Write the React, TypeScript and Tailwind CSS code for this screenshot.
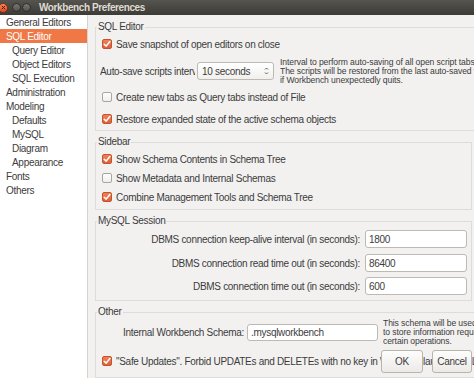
import React from 'react';

const navItems: { label: string; indent?: boolean; active?: boolean }[] = [
  { label: 'General Editors' },
  { label: 'SQL Editor', active: true },
  { label: 'Query Editor', indent: true },
  { label: 'Object Editors', indent: true },
  { label: 'SQL Execution', indent: true },
  { label: 'Administration' },
  { label: 'Modeling' },
  { label: 'Defaults', indent: true },
  { label: 'MySQL', indent: true },
  { label: 'Diagram', indent: true },
  { label: 'Appearance', indent: true },
  { label: 'Fonts' },
  { label: 'Others' },
];

function Check({ checked, label }: { checked?: boolean; label: string }) {
  return (
    <div className="flex h-[16px] items-center gap-[4px] whitespace-nowrap pl-[6px]">
      {checked ? (
        <span className="flex h-[10px] w-[10px] shrink-0 items-center justify-center rounded-[2px] border border-[#c4532f] bg-gradient-to-b from-[#f08158] to-[#e05f38]">
          <svg width="8" height="8" viewBox="0 0 8 8">
            <path d="M1.2 4.2 L3.2 6.1 L6.9 1.6" fill="none" stroke="#fff" strokeWidth="1.5" strokeLinecap="round" strokeLinejoin="round" />
          </svg>
        </span>
      ) : (
        <span className="h-[10px] w-[10px] shrink-0 rounded-[2px] border border-[#a9a69f] bg-gradient-to-b from-white to-[#efeeec]" />
      )}
      <span>{label}</span>
    </div>
  );
}

function Group({ title, children, className }: { title: string; children: React.ReactNode; className?: string }) {
  return (
    <fieldset className={`mr-[2px] ml-[7px] border border-[#dedcd8] ${className ?? ''}`}>
      <legend className="ml-[1px] px-[1px] leading-[12px]">{title}</legend>
      {children}
    </fieldset>
  );
}

function Field({ label, value }: { label: string; value: string }) {
  return (
    <div className="flex h-[18px] items-center justify-end gap-[5px] pr-[4px]">
      <span className="whitespace-nowrap">{label}</span>
      <div className="flex h-[18px] w-[102px] items-center rounded-[3px] border border-[#bdbab4] bg-white pl-[3px]">{value}</div>
    </div>
  );
}

export default function App() {
  return (
    <div
      className="relative h-[378px] w-[474px] overflow-hidden bg-[#f2f1f0] text-[10px] tracking-[-0.3px] text-[#3c3c3c]"
      style={{ fontFamily: '"Liberation Sans", Arial, sans-serif' }}
    >
      {/* title bar */}
      <div className="flex h-[15px] items-center bg-gradient-to-b from-[#56544e] to-[#3c3b37]">
        <span className="ml-[-2px] flex h-[10px] w-[10px] items-center justify-center rounded-full border border-[#8c2c12] bg-gradient-to-b from-[#f58a5c] to-[#df4a1c]">
          <svg width="5" height="5" viewBox="0 0 5 5">
            <path d="M0.8 0.8 L4.2 4.2 M4.2 0.8 L0.8 4.2" stroke="#4a1a0a" strokeWidth="1" />
          </svg>
        </span>
        <span className="ml-[4px] h-[9px] w-[9px] rounded-full border border-[#2f2e2b] bg-gradient-to-b from-[#7a7872] to-[#55534e]" />
        <span className="ml-[1px] h-[9px] w-[9px] rounded-full border border-[#2f2e2b] bg-gradient-to-b from-[#7a7872] to-[#55534e]" />
        <span className="ml-[8px] text-[10px] font-bold tracking-[-0.4px] text-[#dfdbd2]">Workbench Preferences</span>
      </div>

      <div className="flex h-[363px]">
        {/* sidebar */}
        <div className="w-[88px] shrink-0 border-r border-[#d6d4cf] bg-white">
          {navItems.map((it) => (
            <div
              key={it.label}
              className={`flex h-[14px] items-center whitespace-nowrap ${it.indent ? 'pl-[12px]' : 'pl-[6px]'} ${
                it.active ? 'bg-[#f07746] text-white' : ''
              }`}
            >
              {it.label}
            </div>
          ))}
        </div>

        {/* content */}
        <div className="flex min-w-0 flex-1 flex-col gap-[5px] pt-[6px]">
          <Group title="SQL Editor" className="pb-[3px]">
            <div className="mt-[3px]">
              <Check checked label="Save snapshot of open editors on close" />
            </div>
            <div className="mt-[6px] flex h-[26px] items-center pl-[4px]">
              <span className="w-[95px] shrink-0 overflow-hidden whitespace-nowrap">Auto-save scripts interval:</span>
              <div className="ml-[2px] flex h-[18px] w-[77px] shrink-0 items-center justify-between rounded-[3px] border border-[#bdbab4] bg-gradient-to-b from-white to-[#f1f0ee] pr-[4px] pl-[4px]">
                <span>10 seconds</span>
                <svg width="5" height="10" viewBox="0 0 5 10">
                  <path d="M1 3.5 L2.5 2 L4 3.5 M1 6.5 L2.5 8 L4 6.5" fill="none" stroke="#4c4c4c" strokeWidth="0.9" />
                </svg>
              </div>
              <div className="ml-[6px] min-w-0 flex-1 overflow-hidden whitespace-nowrap text-[8.6px] leading-[9px] tracking-[-0.1px]">
                <div>Interval to perform auto-saving of all open script tabs.</div>
                <div>The scripts will be restored from the last auto-saved version</div>
                <div>if Workbench unexpectedly quits.</div>
              </div>
            </div>
            <div className="mt-[5px]">
              <Check label="Create new tabs as Query tabs instead of File" />
            </div>
            <div className="mt-[6px]">
              <Check checked label="Restore expanded state of the active schema objects" />
            </div>
          </Group>

          <Group title="Sidebar" className="pb-[4px]">
            <div className="mt-[3px]">
              <Check checked label="Show Schema Contents in Schema Tree" />
            </div>
            <div className="mt-[3px]">
              <Check label="Show Metadata and Internal Schemas" />
            </div>
            <div className="mt-[3px]">
              <Check checked label="Combine Management Tools and Schema Tree" />
            </div>
          </Group>

          <Group title="MySQL Session" className="pb-[5px]">
            <div className="mt-[3px]">
              <Field label="DBMS connection keep-alive interval (in seconds):" value="1800" />
            </div>
            <div className="mt-[6px]">
              <Field label="DBMS connection read time out (in seconds):" value="86400" />
            </div>
            <div className="mt-[5px]">
              <Field label="DBMS connection time out (in seconds):" value="600" />
            </div>
          </Group>

          <Group title="Other" className="pb-[8px]">
            <div className="mt-[2px] flex h-[24px] items-center pl-[27px]">
              <span className="whitespace-nowrap">Internal Workbench Schema:</span>
              <div className="ml-[3px] flex h-[17px] w-[131px] shrink-0 items-center rounded-[3px] border border-[#bdbab4] bg-white pl-[3px]">
                .mysqlworkbench
              </div>
              <div className="ml-[5px] min-w-0 flex-1 overflow-hidden whitespace-nowrap text-[8.6px] leading-[9px] tracking-[-0.1px]">
                <div>This schema will be used to</div>
                <div>to store information required for</div>
                <div>certain operations.</div>
              </div>
            </div>
            <div className="mt-[9px] overflow-hidden">
              <Check checked label={'"Safe Updates". Forbid UPDATEs and DELETEs with no key in WHERE clause or no LIMIT clause.'} />
            </div>
          </Group>
        </div>
      </div>

      {/* dialog buttons lying over the content */}
      <div className="absolute top-[350px] left-[381px] flex gap-[9px]">
        <button className="flex h-[23px] w-[42px] items-center justify-center rounded-[3px] border border-[#b8b5af] bg-gradient-to-b from-[#fdfdfc] to-[#eceae7]">
          OK
        </button>
        <button className="flex h-[23px] w-[40px] items-center justify-center rounded-[3px] border border-[#b8b5af] bg-gradient-to-b from-[#fdfdfc] to-[#eceae7]">
          Cancel
        </button>
      </div>
    </div>
  );
}
